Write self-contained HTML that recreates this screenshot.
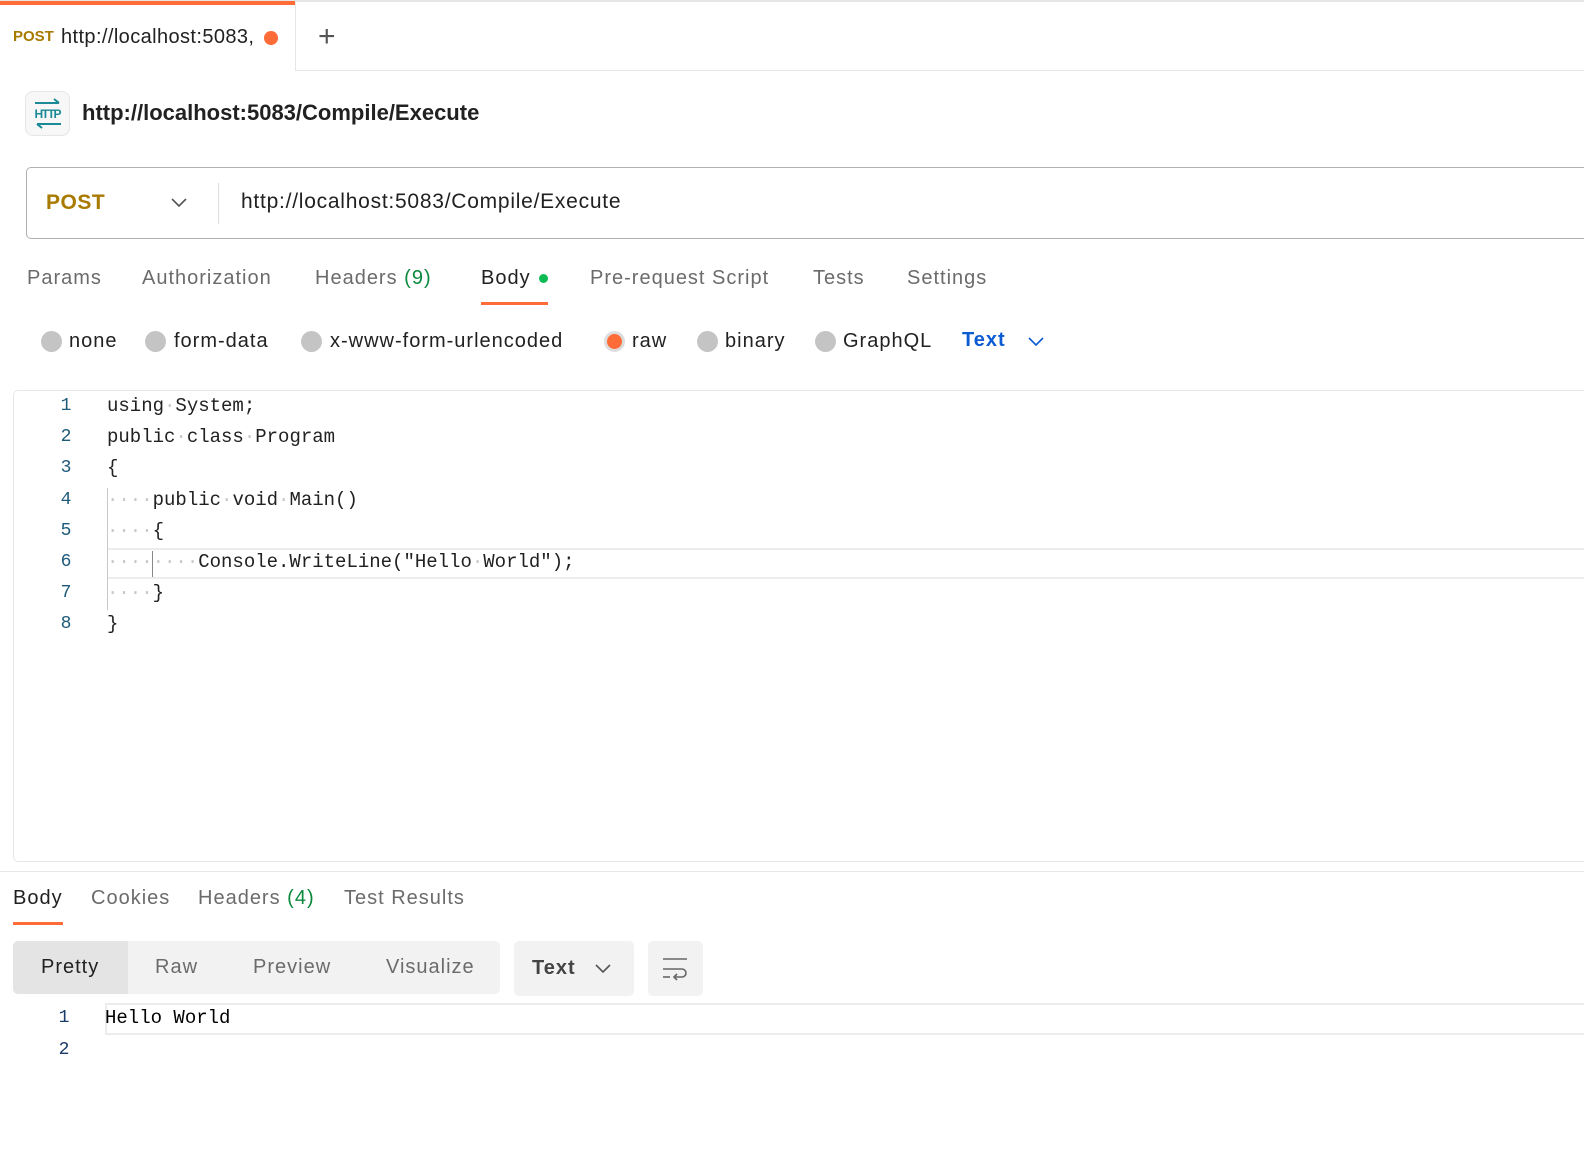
<!DOCTYPE html>
<html><head><meta charset="utf-8"><style>
*{margin:0;padding:0;box-sizing:border-box}
body{width:1584px;height:1159px;background:#fff;position:relative;overflow:hidden;font-family:"Liberation Sans",sans-serif;color:#212121}
.a{position:absolute;white-space:nowrap}
.tab{font-size:20px;color:#6b6b6b;letter-spacing:1px}
.mono{font-family:"Liberation Mono",monospace;font-size:19px;color:#212121}
.ln{font-family:"Liberation Mono",monospace;font-size:18px;color:#1e5a7a;width:30px;text-align:center}
.r{width:21px;height:21px;border-radius:50%;background:#c4c4c4}
.dot{color:#c8c8c8}
</style></head><body>
<!-- top tab -->
<div class="a" style="left:0;top:0;width:1584px;height:2px;background:#e6e6e6"></div>
<div class="a" style="left:0;top:1px;width:295px;height:4px;background:#ff6c37"></div>
<div class="a" style="left:295px;top:2px;width:1px;height:69px;background:#e6e6e6"></div>
<div class="a" style="left:296px;top:70px;width:1288px;height:1px;background:#e6e6e6"></div>
<div class="a" style="left:13px;top:28px;font-size:15px;font-weight:bold;color:#a97a00">POST</div>
<div class="a" style="left:61px;top:26px;font-size:20px;color:#212121;letter-spacing:0.4px">http://localhost:5083,</div>
<div class="a" style="left:264px;top:31px;width:14px;height:14px;border-radius:50%;background:#ff6c37"></div>
<div class="a" style="left:318px;top:20px;font-size:30px;color:#555;font-weight:300">+</div>
<!-- title -->
<div class="a" style="left:25px;top:91px;width:45px;height:45px;border:1px solid #e6e6e6;border-radius:8px;background:#f7f7f7"></div>
<svg class="a" style="left:31px;top:97px" width="34" height="34" viewBox="0 0 34 34"><g stroke="#1b8a96" stroke-width="2" fill="none"><path d="M4 6H28M23 2L28 6"/><path d="M6 27H30M11 31L6 27"/></g><text x="17" y="21" text-anchor="middle" font-family="Liberation Sans" font-size="12" fill="#1b8a96" font-weight="bold" textLength="27">HTTP</text></svg>
<div class="a" style="left:82px;top:100px;font-size:22px;font-weight:bold;color:#212121">http://localhost:5083/Compile/Execute</div>
<!-- url bar -->
<div class="a" style="left:26px;top:167px;width:1600px;height:72px;border:1px solid #b0b0b0;border-radius:5px"></div>
<div class="a" style="left:218px;top:183px;width:1px;height:41px;background:#dedede"></div>
<div class="a" style="left:46px;top:191px;font-size:21px;font-weight:bold;color:#a97a00;letter-spacing:0.5px">POST</div>
<svg class="a" style="left:171px;top:197px" width="16" height="12"><path d="M1 2L8 9L15 2" stroke="#555" stroke-width="1.6" fill="none"/></svg>
<div class="a" style="left:241px;top:190px;font-size:21px;color:#212121;letter-spacing:0.75px">http://localhost:5083/Compile/Execute</div>
<!-- request tabs -->
<div class="a tab" style="left:27px;top:267px">Params</div>
<div class="a tab" style="left:142px;top:267px">Authorization</div>
<div class="a tab" style="left:315px;top:267px">Headers <span style="color:#0a8a3c">(9)</span></div>
<div class="a tab" style="left:481px;top:267px;color:#212121">Body</div>
<div class="a" style="left:539px;top:274px;width:9px;height:9px;border-radius:50%;background:#0cbb52"></div>
<div class="a" style="left:481px;top:302px;width:67px;height:3px;background:#ff6c37"></div>
<div class="a tab" style="left:590px;top:267px">Pre-request Script</div>
<div class="a tab" style="left:813px;top:267px">Tests</div>
<div class="a tab" style="left:907px;top:267px">Settings</div>
<!-- radios -->
<div class="a r" style="left:41px;top:331px"></div><div class="a tab" style="left:69px;top:330px;color:#212121">none</div>
<div class="a r" style="left:145px;top:331px"></div><div class="a tab" style="left:174px;top:330px;color:#212121">form-data</div>
<div class="a r" style="left:301px;top:331px"></div><div class="a tab" style="left:330px;top:330px;color:#212121">x-www-form-urlencoded</div>
<div class="a r" style="left:604px;top:331px;background:#ff6c37;border:3px solid #ddd"></div><div class="a tab" style="left:632px;top:330px;color:#212121">raw</div>
<div class="a r" style="left:697px;top:331px"></div><div class="a tab" style="left:725px;top:330px;color:#212121">binary</div>
<div class="a r" style="left:815px;top:331px"></div><div class="a tab" style="left:843px;top:330px;color:#212121">GraphQL</div>
<div class="a" style="left:962px;top:329px;font-size:20px;font-weight:bold;color:#0b5bd3;letter-spacing:1px">Text</div>
<svg class="a" style="left:1028px;top:336px" width="16" height="12"><path d="M1 2L8 9L15 2" stroke="#0b5bd3" stroke-width="1.6" fill="none"/></svg>
<!-- editor -->
<div class="a" style="left:13px;top:390px;width:1600px;height:472px;border:1px solid #e6e6e6;border-radius:5px"></div>
<div class="a" style="left:107px;top:548px;width:1500px;height:31px;border-top:2px solid #ececec;border-bottom:2px solid #ececec"></div>
<div class="a" style="left:107px;top:488px;width:1px;height:122px;background:#c8c8c8"></div>
<div class="a" style="left:152px;top:551px;width:1px;height:26px;background:#888"></div>
<div class="a ln" style="left:51px;top:396px">1</div>
<div class="a ln" style="left:51px;top:427px">2</div>
<div class="a ln" style="left:51px;top:458px">3</div>
<div class="a ln" style="left:51px;top:490px">4</div>
<div class="a ln" style="left:51px;top:521px">5</div>
<div class="a ln" style="left:51px;top:552px">6</div>
<div class="a ln" style="left:51px;top:583px">7</div>
<div class="a ln" style="left:51px;top:614px">8</div>
<div class="a mono" style="left:107px;top:395px">using<span class="dot">·</span>System;</div>
<div class="a mono" style="left:107px;top:426px">public<span class="dot">·</span>class<span class="dot">·</span>Program</div>
<div class="a mono" style="left:107px;top:457px">{</div>
<div class="a mono" style="left:107px;top:489px"><span class="dot">····</span>public<span class="dot">·</span>void<span class="dot">·</span>Main()</div>
<div class="a mono" style="left:107px;top:520px"><span class="dot">····</span>{</div>
<div class="a mono" style="left:107px;top:551px"><span class="dot">········</span>Console.WriteLine("Hello<span class="dot">·</span>World");</div>
<div class="a mono" style="left:107px;top:582px"><span class="dot">····</span>}</div>
<div class="a mono" style="left:107px;top:613px">}</div>
<!-- response -->
<div class="a" style="left:0;top:871px;width:1584px;height:1px;background:#e6e6e6"></div>
<div class="a tab" style="left:13px;top:887px;color:#212121">Body</div>
<div class="a" style="left:13px;top:922px;width:50px;height:3px;background:#ff6c37"></div>
<div class="a tab" style="left:91px;top:887px">Cookies</div>
<div class="a tab" style="left:198px;top:887px">Headers <span style="color:#0a8a3c">(4)</span></div>
<div class="a tab" style="left:344px;top:887px">Test Results</div>
<div class="a" style="left:13px;top:941px;width:487px;height:53px;background:#f2f2f2;border-radius:5px"></div>
<div class="a" style="left:13px;top:941px;width:115px;height:53px;background:#e4e4e4;border-radius:5px 0 0 5px"></div>
<div class="a tab" style="left:41px;top:956px;color:#212121">Pretty</div>
<div class="a tab" style="left:155px;top:956px">Raw</div>
<div class="a tab" style="left:253px;top:956px">Preview</div>
<div class="a tab" style="left:386px;top:956px">Visualize</div>
<div class="a" style="left:514px;top:941px;width:120px;height:55px;background:#f2f2f2;border-radius:5px"></div>
<div class="a" style="left:532px;top:957px;font-size:20px;font-weight:bold;color:#444;letter-spacing:1px">Text</div>
<svg class="a" style="left:595px;top:963px" width="16" height="12"><path d="M1 2L8 9L15 2" stroke="#555" stroke-width="1.6" fill="none"/></svg>
<div class="a" style="left:648px;top:941px;width:55px;height:55px;background:#f2f2f2;border-radius:5px"></div>
<svg class="a" style="left:660px;top:955px" width="30" height="28"><g stroke="#666" stroke-width="1.6" fill="none"><path d="M3 4H27"/><path d="M3 14H22a4 4 0 0 1 0 8H14"/><path d="M17 19L14 22L17 25"/><path d="M3 22H10"/></g></svg>
<div class="a" style="left:105px;top:1003px;width:1500px;height:32px;border:2px solid #ececec;border-right:none"></div>
<div class="a ln" style="left:49px;top:1008px;color:#1a3a6a">1</div>
<div class="a ln" style="left:49px;top:1040px;color:#1a3a6a">2</div>
<div class="a mono" style="left:105px;top:1007px;color:#000">Hello World</div>
</body></html>
